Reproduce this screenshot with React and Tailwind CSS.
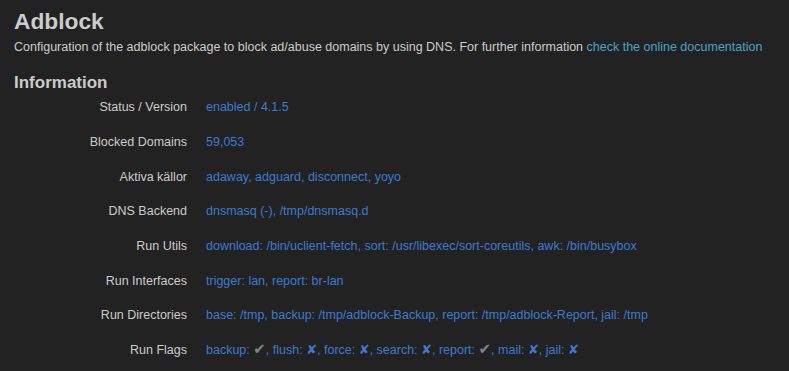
import React from "react";

const rows = [
  ["Status / Version", "enabled / 4.1.5"],
  ["Blocked Domains", "59,053"],
  ["Aktiva källor", "adaway, adguard, disconnect, yoyo"],
  ["DNS Backend", "dnsmasq (-), /tmp/dnsmasq.d"],
  ["Run Utils", "download: /bin/uclient-fetch, sort: /usr/libexec/sort-coreutils, awk: /bin/busybox"],
  ["Run Interfaces", "trigger: lan, report: br-lan"],
  ["Run Directories", "base: /tmp, backup: /tmp/adblock-Backup, report: /tmp/adblock-Report, jail: /tmp"],
];

const Check = () => (
  <span className="text-[15px] leading-none text-[#7a878c]" style={{ fontFamily: '"DejaVu Sans", sans-serif' }}>
    ✔
  </span>
);
const Cross = () => (
  <span className="text-[#3d7bd0] text-[13px] leading-none" style={{ fontFamily: '"DejaVu Sans", sans-serif' }}>✘</span>
);

export default function App() {
  return (
    <div
      className="w-[789px] h-[371px] bg-[#222222] overflow-hidden px-[14px] pt-[7px]"
      style={{ fontFamily: '"Liberation Sans", Arial, sans-serif' }}
    >
      <h1 className="text-[22.75px] font-bold text-[#cccccc] leading-[28px]">Adblock</h1>
      <p className="text-[12.5px] text-[#cccccc] leading-[18px] mt-[3px] whitespace-nowrap">
        Configuration of the adblock package to block ad/abuse domains by using DNS. For further information{" "}
        <span className="text-[#4aa3c7]">check the online documentation</span>
      </p>
      <h2 className="text-[17px] font-bold text-[#cccccc] leading-[16px] mt-[19px]">Information</h2>
      <div className="flex flex-col mt-[-1px]">
        {rows.map(([l, v]) => (
          <div key={l} className="flex items-center h-[34.7px] text-[12.5px] leading-[18px] whitespace-nowrap">
            <div className="w-[173px] text-right text-[#cccccc]">{l}</div>
            <div className="ml-[19px] text-[#3d7bd0]">{v}</div>
          </div>
        ))}
        <div className="flex items-center h-[34.7px] text-[12.5px] leading-[18px] whitespace-nowrap">
          <div className="w-[173px] text-right text-[#cccccc]">Run Flags</div>
          <div className="ml-[19px] text-[#3d7bd0]">
            backup: <Check />, flush: <Cross />, force: <Cross />, search: <Cross />, report: <Check />, mail: <Cross />, jail: <Cross />
          </div>
        </div>
      </div>
    </div>
  );
}
